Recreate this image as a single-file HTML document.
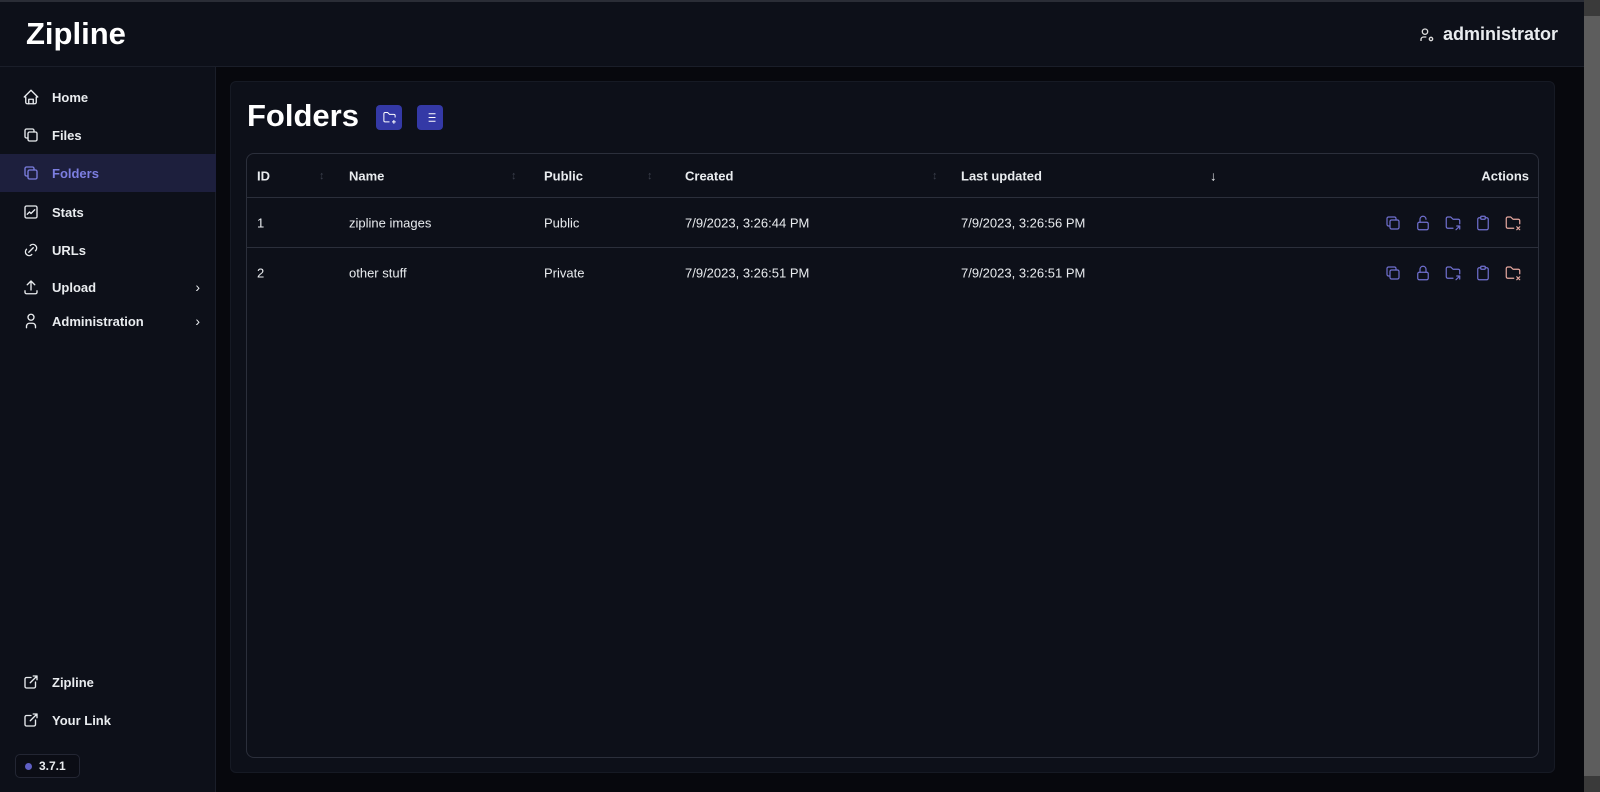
<!DOCTYPE html>
<html><head><meta charset="utf-8"><style>
*{box-sizing:border-box;margin:0;padding:0}
body{width:1600px;height:792px;overflow:hidden;background:#07080d;font-family:"Liberation Sans",sans-serif;color:#e9ecef;position:relative}
.hdr{position:absolute;left:0;top:0;width:1584px;height:67px;background:#0d1019;border-bottom:1px solid #1a1e29;border-top:2px solid #2a2d36}
.logo{position:absolute;left:26px;top:14px;font-size:31px;font-weight:bold;color:#fff}
.user{position:absolute;right:26px;top:22px;font-size:18px;font-weight:bold;display:flex;align-items:center;gap:8px}
.side{position:absolute;left:0;top:67px;width:216px;height:725px;background:#0d1019;border-right:1px solid #1a1e29}
.nav{position:absolute;left:0;width:216px;height:38px;display:flex;align-items:center;padding-left:22px;font-size:13px;font-weight:bold;color:#e9ecef}
.nav svg{width:18px;height:18px;margin-right:12px;stroke:#e9ecef;fill:none;stroke-width:1.8;stroke-linecap:round;stroke-linejoin:round}
.nav.act{background:#1d1f3d;color:#7c7ee0}.nav.act svg{stroke:#7c7ee0}
.chev{position:absolute;right:16px;font-weight:normal;font-size:14px}
.ver{position:absolute;left:15px;top:754px;width:65px;height:24px;border:1px solid #232633;border-radius:5px;background:#0b0d15;font-size:12px;font-weight:bold;display:flex;align-items:center;padding-left:9px}
.ver i{width:7px;height:7px;border-radius:50%;background:#5f5fc4;margin-right:7px}
.panel{position:absolute;left:230px;top:81px;width:1325px;height:692px;background:#0d1019;border:1px solid #161a24;border-radius:6px}
.title{position:absolute;left:247px;top:98px;font-size:31px;font-weight:bold;color:#fff}
.btn{position:absolute;top:105px;width:26px;height:25px;background:#3439a6;border-radius:4px;display:flex;align-items:center;justify-content:center}
.btn svg{width:15px;height:15px;stroke:#fff;fill:none;stroke-width:1.6}
.tbl{position:absolute;left:246px;top:153px;width:1293px;height:605px;border:1px solid #2b2f3b;border-radius:8px}
.th,.tr{position:absolute;left:0;width:100%;font-size:13px}
.th{top:0;height:44px;border-bottom:1px solid #2b2f3b;font-weight:bold}
.tr{height:50px;border-bottom:1px solid #2b2f3b}
.c{position:absolute;top:50%;transform:translateY(-50%)}
.srt{color:#3b3f4b;font-size:11px}
.acts{position:absolute;right:16px;top:50%;transform:translateY(-50%);display:flex;gap:12px}
.acts svg{width:18px;height:18px;fill:none;stroke:#7070d0;stroke-width:1.6;stroke-linejoin:round;stroke-linecap:round}
.sb{position:absolute;right:0;top:0;width:16px;height:792px;background:#5d5d5d}
.sb .tk{position:absolute;top:0;width:16px;height:16px;background:#3a3a3a}
</style></head><body>
<div class="hdr"><div class="logo">Zipline</div>
<div class="user"><svg width="16" height="16" viewBox="0 0 24 24" fill="none" stroke="#ddd" stroke-width="2"><circle cx="9" cy="7" r="4"/><path d="M3 21v-2a4 4 0 0 1 4-4h4"/><circle cx="18" cy="18" r="2.5"/></svg>administrator</div></div>
<div class="side">
<div class="nav" style="top:11px"><svg viewBox="0 0 24 24"><path d="M5 12H3l9-9 9 9h-2M5 12v7a2 2 0 0 0 2 2h10a2 2 0 0 0 2-2v-7"/><path d="M9 21v-6h6v6"/></svg>Home</div>
<div class="nav" style="top:49px"><svg viewBox="0 0 24 24"><rect x="8" y="8" width="12" height="12" rx="2"/><path d="M16 8V6a2 2 0 0 0-2-2H6a2 2 0 0 0-2 2v8a2 2 0 0 0 2 2h2"/></svg>Files</div>
<div class="nav act" style="top:87px"><svg viewBox="0 0 24 24"><rect x="8" y="8" width="12" height="12" rx="2"/><path d="M16 8V6a2 2 0 0 0-2-2H6a2 2 0 0 0-2 2v8a2 2 0 0 0 2 2h2"/></svg>Folders</div>
<div class="nav" style="top:126px"><svg viewBox="0 0 24 24"><rect x="4" y="4" width="16" height="16" rx="2"/><path d="M7 15l3-3 2 2 5-5"/></svg>Stats</div>
<div class="nav" style="top:164px"><svg viewBox="0 0 24 24"><path d="M9 15l6-6M11 6l.5-.5a5 5 0 0 1 7 7l-.5.5M13 18l-.4.5a5 5 0 0 1-7-7L6 11"/></svg>URLs</div>
<div class="nav" style="top:201px"><svg viewBox="0 0 24 24"><path d="M4 17v2a2 2 0 0 0 2 2h12a2 2 0 0 0 2-2v-2M7 9l5-5 5 5M12 4v12"/></svg>Upload<span class="chev">›</span></div>
<div class="nav" style="top:235px"><svg viewBox="0 0 24 24"><circle cx="12" cy="7" r="4"/><path d="M6 21v-2a4 4 0 0 1 4-4h4a4 4 0 0 1 4 4v2"/></svg>Administration<span class="chev">›</span></div>
<div class="nav" style="top:596px"><svg viewBox="0 0 24 24"><path d="M12 6H6a2 2 0 0 0-2 2v10a2 2 0 0 0 2 2h10a2 2 0 0 0 2-2v-6M11 13l9-9M15 4h5v5"/></svg>Zipline</div>
<div class="nav" style="top:634px"><svg viewBox="0 0 24 24"><path d="M12 6H6a2 2 0 0 0-2 2v10a2 2 0 0 0 2 2h10a2 2 0 0 0 2-2v-6M11 13l9-9M15 4h5v5"/></svg>Your Link</div>
</div>
<div class="ver"><i></i>3.7.1</div>
<div class="panel"></div>
<div class="title">Folders</div>
<div class="btn" style="left:376px"><svg viewBox="0 0 24 24"><path d="M12 19H5a2 2 0 0 1-2-2V6a2 2 0 0 1 2-2h4l3 3h7a2 2 0 0 1 2 2v3M16 19h6M19 16v6"/></svg></div>
<div class="btn" style="left:417px"><svg viewBox="0 0 24 24"><path d="M9 6h11M9 12h11M9 18h11M5 6v.01M5 12v.01M5 18v.01"/></svg></div>
<div class="tbl">
<div class="th"><span class="c" style="left:10px">ID</span><span class="c srt" style="left:72px">↕</span><span class="c" style="left:102px">Name</span><span class="c srt" style="left:264px">↕</span><span class="c" style="left:297px">Public</span><span class="c srt" style="left:400px">↕</span><span class="c" style="left:438px">Created</span><span class="c srt" style="left:685px">↕</span><span class="c" style="left:714px">Last updated</span><span class="c" style="left:963px;font-weight:normal">↓</span><span class="c" style="right:9px">Actions</span></div>
<div class="tr" style="top:44px"><span class="c" style="left:10px">1</span><span class="c" style="left:102px">zipline images</span><span class="c" style="left:297px">Public</span><span class="c" style="left:438px">7/9/2023, 3:26:44 PM</span><span class="c" style="left:714px">7/9/2023, 3:26:56 PM</span>
<div class="acts"><svg viewBox="0 0 24 24"><rect x="8" y="8" width="12" height="12" rx="2"/><path d="M16 8V6a2 2 0 0 0-2-2H6a2 2 0 0 0-2 2v8a2 2 0 0 0 2 2h2"/></svg><svg viewBox="0 0 24 24"><rect x="5" y="11" width="14" height="10" rx="2"/><path d="M8 11V7a4 4 0 0 1 8 0"/></svg><svg viewBox="0 0 24 24"><path d="M12 19H5a2 2 0 0 1-2-2V6a2 2 0 0 1 2-2h4l3 3h7a2 2 0 0 1 2 2v4M16 21l5-5M17 16h4v4"/></svg><svg viewBox="0 0 24 24"><path d="M9 5H7a2 2 0 0 0-2 2v12a2 2 0 0 0 2 2h10a2 2 0 0 0 2-2V7a2 2 0 0 0-2-2h-2"/><rect x="9" y="3" width="6" height="4" rx="1"/></svg><svg viewBox="0 0 24 24" style="stroke:#e8a9a0"><path d="M13 19H5a2 2 0 0 1-2-2V6a2 2 0 0 1 2-2h4l3 3h7a2 2 0 0 1 2 2v4M17 17l4 4M21 17l-4 4"/></svg></div></div>
<div class="tr" style="top:94px;border-bottom:none"><span class="c" style="left:10px">2</span><span class="c" style="left:102px">other stuff</span><span class="c" style="left:297px">Private</span><span class="c" style="left:438px">7/9/2023, 3:26:51 PM</span><span class="c" style="left:714px">7/9/2023, 3:26:51 PM</span>
<div class="acts"><svg viewBox="0 0 24 24"><rect x="8" y="8" width="12" height="12" rx="2"/><path d="M16 8V6a2 2 0 0 0-2-2H6a2 2 0 0 0-2 2v8a2 2 0 0 0 2 2h2"/></svg><svg viewBox="0 0 24 24"><rect x="5" y="11" width="14" height="10" rx="2"/><path d="M8 11V7a4 4 0 0 1 8 0v4"/></svg><svg viewBox="0 0 24 24"><path d="M12 19H5a2 2 0 0 1-2-2V6a2 2 0 0 1 2-2h4l3 3h7a2 2 0 0 1 2 2v4M16 21l5-5M17 16h4v4"/></svg><svg viewBox="0 0 24 24"><path d="M9 5H7a2 2 0 0 0-2 2v12a2 2 0 0 0 2 2h10a2 2 0 0 0 2-2V7a2 2 0 0 0-2-2h-2"/><rect x="9" y="3" width="6" height="4" rx="1"/></svg><svg viewBox="0 0 24 24" style="stroke:#e8a9a0"><path d="M13 19H5a2 2 0 0 1-2-2V6a2 2 0 0 1 2-2h4l3 3h7a2 2 0 0 1 2 2v4M17 17l4 4M21 17l-4 4"/></svg></div></div>
</div>
<div class="sb"><div class="tk"></div><div class="tk" style="top:776px"></div></div>
</body></html>
